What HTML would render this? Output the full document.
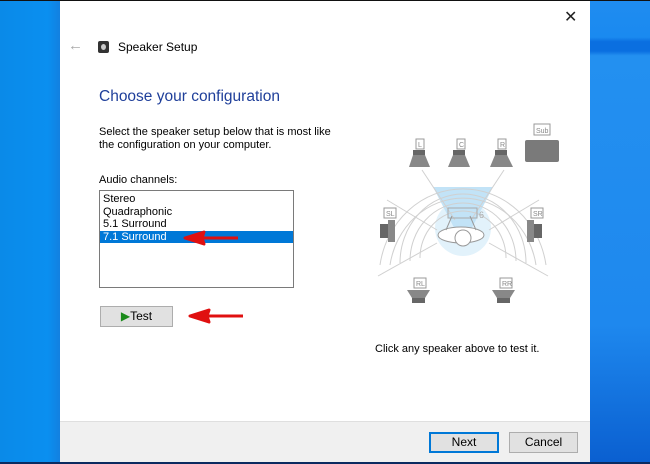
<!DOCTYPE html>
<html><head><style>
*{margin:0;padding:0;box-sizing:border-box}
body{width:650px;height:464px;overflow:hidden;position:relative;background:#1a78d8;font-family:"Liberation Sans",sans-serif;font-size:11px;color:#000}
.bgl{position:absolute;left:0;top:0;width:60px;height:464px;background:linear-gradient(90deg,#0a8ae8,#0a8ff0 80%,#1380e0)}
.bgr{position:absolute;left:590px;top:0;width:60px;height:464px;background:linear-gradient(180deg,#1f8cf0,#1a8af0 8%,#0a6fe0 9%,#0a6fe0 11%,#2390f0 12%,#1e88ee 70%,#0a5fd0)}
.win{position:absolute;left:60px;top:1px;width:530px;height:461px;background:#fff}
.foot{position:absolute;left:0;top:420px;width:530px;height:41px;background:#f0f0f0;border-top:1px solid #dfdfdf}
.t{position:absolute;white-space:nowrap}
.btn{position:absolute;border:1px solid #adadad;background:#e1e1e1;text-align:center;font-size:12px;line-height:19px}
.lb{position:absolute;left:39px;top:189px;width:195px;height:98px;border:1px solid #7a7a7a;padding-top:2px}
.lb div{height:12.5px;line-height:12.5px;padding-left:3px;font-size:11px}
</style></head><body>
<div class="bgl"></div><div class="bgr"></div>
<div style="position:absolute;left:0;top:0;width:650px;height:1px;background:#111"></div>
<div style="position:absolute;left:0;top:462px;width:650px;height:2px;background:#0b2a60"></div>
<div class="win">
<div class="t" style="left:504px;top:6px;font-size:16px;color:#222">✕</div>
<div class="t" style="left:8px;top:36px;font-size:15px;color:#aaa">←</div>
<div style="position:absolute;left:38px;top:40px;width:11px;height:12px;background:#333;border-radius:2px"><div style="position:absolute;left:3px;top:3px;width:5px;height:6px;background:#ccc;border-radius:50%"></div></div>
<div class="t" style="left:58px;top:39px;font-size:12px">Speaker Setup</div>
<div class="t" style="left:39px;top:87px;font-size:15.5px;color:#1f3f9a">Choose your configuration</div>
<div class="t" style="left:39px;top:125px;line-height:13px;font-size:11px">Select the speaker setup below that is most like<br>the configuration on your computer.</div>
<div class="t" style="left:39px;top:173px">Audio channels:</div>
<div class="lb">
<div>Stereo</div><div>Quadraphonic</div><div>5.1 Surround</div>
<div style="background:#0078d7;color:#fff">7.1 Surround</div>
</div>
<div class="btn" style="left:40px;top:305px;width:73px;height:21px"><span style="color:#1a8a1a">▶</span>Test</div>
<svg style="position:absolute;left:120px;top:226px" width="60" height="20"><path d="M58 11 L22 11 L24 5 L5 11 L24 17 L22 11" fill="#e01010" stroke="#e01010" stroke-width="3" stroke-linejoin="round"/></svg>
<svg style="position:absolute;left:125px;top:305px" width="60" height="20"><path d="M58 10 L22 10 L24 4 L5 10 L24 16 L22 10" fill="#e01010" stroke="#e01010" stroke-width="3" stroke-linejoin="round"/></svg>
<div class="t" style="left:315px;top:342px;font-size:11px">Click any speaker above to test it.</div>
<div class="foot">
<div class="btn" style="left:369px;top:10px;width:70px;height:21px;border:2px solid #0078d7;line-height:17px">Next</div>
<div class="btn" style="left:449px;top:10px;width:69px;height:21px">Cancel</div>
</div>
</div>
<svg style="position:absolute;left:0;top:0" width="650" height="464" fill="none" stroke="#d0d0d0">
<circle cx="463" cy="228" r="28" fill="#e2f2fb" stroke="none"/>
<path d="M433 187 L493 187 L463 245Z" fill="#c2e3f7" stroke="none"/>
<path d="M380 265 A84 90 0 0 1 546 265"/>
<path d="M390 265 A74 80 0 0 1 536 265"/>
<path d="M400 263 A63 69 0 0 1 526 263"/>
<path d="M410 261 A53 58 0 0 1 516 261"/>
<path d="M420 258 A43 47 0 0 1 506 258"/>
<path d="M422 170 L455 220 M504 170 L471 220 M387 200 L437 230 M539 200 L489 230 M378 276 L437 243 M548 276 L489 243"/>
<rect x="448" y="208" width="29" height="10" stroke="#aaa"/>
<text x="479" y="218" font-size="9" fill="#aaa" stroke="none" font-family="Liberation Sans">6</text>
<ellipse cx="461" cy="235" rx="23" ry="8" fill="#fff" stroke="#999"/>
<path d="M446 230 L452 216 M476 230 L470 216" stroke="#999"/>
<circle cx="463" cy="238" r="8" fill="#fff" stroke="#999"/>
<g fill="#888" stroke="none">
<rect x="413" y="150" width="12" height="5" fill="#666"/><path d="M413 155 L425 155 L430 167 L409 167Z"/>
<rect x="453" y="150" width="12" height="5" fill="#666"/><path d="M453 155 L465 155 L470 167 L448 167Z"/>
<rect x="495" y="150" width="12" height="5" fill="#666"/><path d="M495 155 L507 155 L513 167 L490 167Z"/>
<rect x="525" y="140" width="34" height="22" rx="2" fill="#7a7a7a"/>
<rect x="380" y="224" width="8" height="14" fill="#666"/><path d="M388 220 L395 220 L395 242 L388 242Z"/>
<rect x="534" y="224" width="8" height="14" fill="#666"/><path d="M527 220 L534 220 L534 242 L527 242Z"/>
<path d="M407 290 L430 290 L425 298 L412 298Z"/><rect x="412" y="298" width="13" height="5" fill="#666"/>
<path d="M492 290 L515 290 L510 298 L497 298Z"/><rect x="497" y="298" width="13" height="5" fill="#666"/>
</g>
<g stroke="#999" fill="#fff"><rect x="416" y="139" width="8" height="10"/><rect x="457" y="139" width="8" height="10"/><rect x="498" y="139" width="8" height="10"/><rect x="534" y="124" width="16" height="11"/><rect x="384" y="208" width="12" height="10"/><rect x="531" y="208" width="12" height="10"/><rect x="414" y="278" width="12" height="10"/><rect x="500" y="278" width="12" height="10"/></g>
<g fill="#888" stroke="none" font-size="7" font-family="Liberation Sans"><text x="418" y="147">L</text><text x="459" y="147">C</text><text x="500" y="147">R</text><text x="536" y="133">Sub</text><text x="386" y="216">SL</text><text x="533" y="216">SR</text><text x="416" y="286">RL</text><text x="502" y="286">RR</text></g>
</svg>
</body></html>
